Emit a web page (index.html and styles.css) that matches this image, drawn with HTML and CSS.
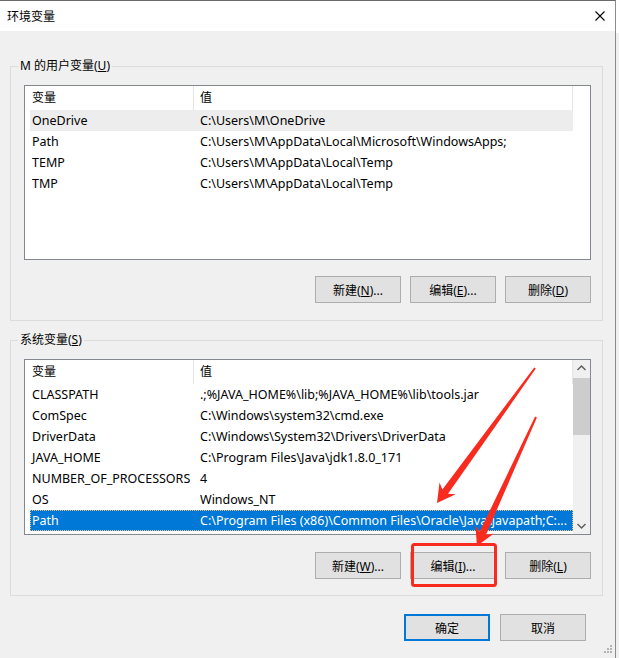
FILE: index.html
```html
<!DOCTYPE html>
<html lang="zh-CN">
<head>
  <meta charset="UTF-8" />
  <meta name="viewport" content="width=device-width, initial-scale=1" />
  <title>环境变量</title>
  <link rel="stylesheet" href="styles.css">
</head>
<body>

<div class="dialog">
  <div class="titlebar">
    <span class="title">环境变量</span>
    <svg class="close" width="10" height="10" viewBox="0 0 10 10">
      <path d="M0.5 0.5L9.5 9.5M9.5 0.5L0.5 9.5" stroke="#000" stroke-width="1.1" fill="none"/>
    </svg>
  </div>

  <div class="group group-user">
    <span class="group-label">M 的用户变量(<u>U</u>)</span>
    <div class="list">
      <div class="list-main">
        <div class="list-head">
          <div class="cell name">变量</div>
          <div class="cell value">值</div>
        </div>
        <div class="row hover"><div class="cell name">OneDrive</div><div class="cell value">C:\Users\M\OneDrive</div></div>
        <div class="row"><div class="cell name">Path</div><div class="cell value">C:\Users\M\AppData\Local\Microsoft\WindowsApps;</div></div>
        <div class="row"><div class="cell name">TEMP</div><div class="cell value">C:\Users\M\AppData\Local\Temp</div></div>
        <div class="row"><div class="cell name">TMP</div><div class="cell value">C:\Users\M\AppData\Local\Temp</div></div>
      </div>
      <div class="list-side"></div>
    </div>
    <div class="buttons">
      <button class="btn">新建(<u>N</u>)...</button>
      <button class="btn">编辑(<u>E</u>)...</button>
      <button class="btn">删除(<u>D</u>)</button>
    </div>
  </div>

  <div class="group group-system">
    <span class="group-label">系统变量(<u>S</u>)</span>
    <div class="list">
      <div class="list-main">
        <div class="list-head">
          <div class="cell name">变量</div>
          <div class="cell value">值</div>
        </div>
        <div class="row"><div class="cell name">CLASSPATH</div><div class="cell value">.;%JAVA_HOME%\lib;%JAVA_HOME%\lib\tools.jar</div></div>
        <div class="row"><div class="cell name">ComSpec</div><div class="cell value">C:\Windows\system32\cmd.exe</div></div>
        <div class="row"><div class="cell name">DriverData</div><div class="cell value">C:\Windows\System32\Drivers\DriverData</div></div>
        <div class="row"><div class="cell name">JAVA_HOME</div><div class="cell value">C:\Program Files\Java\jdk1.8.0_171</div></div>
        <div class="row"><div class="cell name">NUMBER_OF_PROCESSORS</div><div class="cell value">4</div></div>
        <div class="row"><div class="cell name">OS</div><div class="cell value">Windows_NT</div></div>
        <div class="row selected"><div class="cell name">Path</div><div class="cell value">C:\Program Files (x86)\Common Files\Oracle\Java\javapath;C:...</div></div>
      </div>
      <div class="scrollbar">
        <svg class="arrow-btn" width="17" height="17" viewBox="0 0 17 17"><path d="M4.5 10L8.5 6L12.5 10" stroke="#606060" stroke-width="1.5" fill="none"/></svg>
        <div class="thumb"></div>
        <div class="track"></div>
        <svg class="arrow-btn" width="17" height="17" viewBox="0 0 17 17"><path d="M4.5 7L8.5 11L12.5 7" stroke="#606060" stroke-width="1.5" fill="none"/></svg>
      </div>
    </div>
    <div class="buttons">
      <button class="btn">新建(<u>W</u>)...</button>
      <button class="btn">编辑(<u>I</u>)...</button>
      <button class="btn">删除(<u>L</u>)</button>
    </div>
  </div>

  <div class="footer">
    <button class="btn btn-default">确定</button>
    <button class="btn">取消</button>
  </div>

  <!-- annotation drawn on top of the screenshot -->
  <svg class="marks" width="619" height="658" viewBox="0 0 619 658">
    <polygon fill="#f92b1f" points="535.8,368.6 448.0,493.8 455.7,494.3 437,503 439.5,482.5 442.4,489.6 534.2,367.4"/>
    <polygon fill="#f92b1f" points="536.9,417.4 486.0,534.8 493.6,533.8 477,546 475.4,525.4 479.6,531.8 535.1,416.6"/>
    <rect x="412.5" y="544.5" width="83" height="41" rx="2" fill="none" stroke="#f92b1f" stroke-width="3"/>
    <g fill="#b4b4b4">
      <rect x="610" y="645" width="2" height="2"/>
      <rect x="607" y="648" width="2" height="2"/>
      <rect x="610" y="648" width="2" height="2"/>
      <rect x="604" y="651" width="2" height="2"/>
      <rect x="607" y="651" width="2" height="2"/>
      <rect x="610" y="651" width="2" height="2"/>
    </g>
  </svg>
</div>

</body>
</html>
```

FILE: styles.css
```css
* {
  box-sizing: border-box;
}

body {
  margin: 0;
  height: 658px;
  overflow: hidden;
  font-family: "Noto Sans", "Noto Sans CJK SC", sans-serif;
  font-size: 12px;
  color: #000;
  background: linear-gradient(#fff 0, #fff 33px, #f0f0f0 33px);
}

.dialog {
  position: relative;
  width: 616px;
  height: 658px;
  background: #f0f0f0;
  border-top: 1px solid #6b6b6b;
  border-right: 1px solid #8c8c8c;
}

.titlebar {
  height: 30px;
  background: #fff;
  display: flex;
  align-items: center;
  justify-content: space-between;
  padding: 0 10px 0 7px;
}

/* group boxes */
.group {
  margin-left: 10px;
  width: 593px;
  border: 1px solid #dcdcdc;
  padding: 0 11px 17px 13px;
}
.group-user {
  margin-top: 35px;
}
.group-system {
  margin-top: 19px;
  padding-bottom: 16px;
}
.group-label {
  display: block;
  width: fit-content;
  height: 16px;
  margin: -9px 0 0 -6px;
  padding: 0 2px;
  line-height: 16px;
  background: #f0f0f0;
}

/* list views */
.list {
  margin-top: 11px;
  height: 175px;
  display: flex;
  border: 1px solid #828790;
  background: #fff;
}
.group-system .list {
  height: 176px;
}
.list-main {
  width: 548px;
  padding-left: 5px;
  overflow: hidden;
}
.list-side {
  width: 17px;
}
.list-head,
.row {
  display: grid;
  grid-template-columns: 164px 379px;
}
.list-head {
  height: 24px;
}
.list-head .cell {
  line-height: 24px;
  font-size: 12px;
  border-right: 1px solid #e5e5e5;
}
.row {
  height: 21px;
}
.cell {
  font-size: 12.5px;
  line-height: 21px;
  white-space: nowrap;
  overflow: hidden;
}
.cell.name {
  padding-left: 2px;
}
.cell.value {
  padding-left: 6px;
}
.row.hover {
  background: #ededed;
}
.row.selected {
  background: #0078d7;
  color: #fff;
  outline: 1px dotted #f3c27a;
  outline-offset: -1px;
}

.scrollbar {
  width: 17px;
  background: #f0f0f0;
  display: flex;
  flex-direction: column;
}
.arrow-btn {
  display: block;
  flex: none;
}
.thumb {
  height: 57px;
  margin-top: 1px;
  background: #cdcdcd;
}
.track {
  flex: 1;
}

/* buttons */
.buttons {
  display: flex;
  justify-content: flex-end;
  gap: 9px;
  margin-top: 16px;
}
.group-system .buttons {
  margin-top: 17px;
}
.btn {
  width: 86px;
  height: 27px;
  margin: 0;
  padding: 0;
  border: 1px solid #adadad;
  background: #e1e1e1;
  font-family: inherit;
  font-size: 12px;
  color: #000;
}
.btn-default {
  border: 2px solid #0078d7;
}

.footer {
  display: flex;
  justify-content: flex-end;
  gap: 10px;
  margin-top: 18px;
  padding-right: 29px;
}

.marks {
  position: absolute;
  left: 0;
  top: -1px;
  pointer-events: none;
}
```
